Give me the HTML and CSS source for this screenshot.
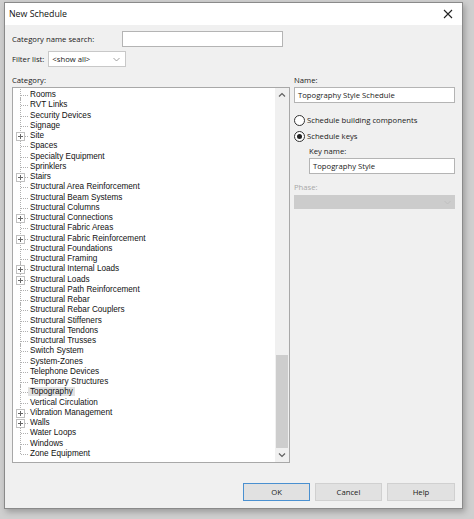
FILE: index.html
```html
<!DOCTYPE html>
<html>
<head>
<meta charset="utf-8">
<link rel="stylesheet" href="styles.css">
</head>
<body>
<div class="backdrop">
  <div class="window">
    <div class="titlebar">
      <span class="title">New Schedule</span>
      <svg class="close" width="10" height="10" viewBox="0 0 10 10"><path d="M1 1L9 9M9 1L1 9" stroke="#222" stroke-width="1.1"/></svg>
    </div>
    <div class="content">
      <div class="row search-row">
        <span class="label search-label">Category name search:</span>
        <div class="textbox search-box"></div>
      </div>
      <div class="row filter-row">
        <span class="label">Filter list:</span>
        <div class="textbox select">
          <span>&lt;show all&gt;</span>
          <svg width="7" height="5" viewBox="0 0 7 5"><path d="M0.5 1L3.5 4L6.5 1" fill="none" stroke="#888" stroke-width="0.8"/></svg>
        </div>
      </div>
      <div class="main">
        <div class="left">
          <div class="label cat-label">Category:</div>
          <div class="listbox">
            <div class="tree">
              <ul>
                <li>Rooms</li>
                <li>RVT Links</li>
                <li>Security Devices</li>
                <li>Signage</li>
                <li class="has"><span class="exp"></span>Site</li>
                <li>Spaces</li>
                <li>Specialty Equipment</li>
                <li>Sprinklers</li>
                <li class="has"><span class="exp"></span>Stairs</li>
                <li>Structural Area Reinforcement</li>
                <li>Structural Beam Systems</li>
                <li>Structural Columns</li>
                <li class="has"><span class="exp"></span>Structural Connections</li>
                <li>Structural Fabric Areas</li>
                <li class="has"><span class="exp"></span>Structural Fabric Reinforcement</li>
                <li>Structural Foundations</li>
                <li>Structural Framing</li>
                <li class="has"><span class="exp"></span>Structural Internal Loads</li>
                <li class="has"><span class="exp"></span>Structural Loads</li>
                <li>Structural Path Reinforcement</li>
                <li>Structural Rebar</li>
                <li>Structural Rebar Couplers</li>
                <li>Structural Stiffeners</li>
                <li>Structural Tendons</li>
                <li>Structural Trusses</li>
                <li>Switch System</li>
                <li>System-Zones</li>
                <li>Telephone Devices</li>
                <li>Temporary Structures</li>
                <li><span class="sel">Topography</span></li>
                <li>Vertical Circulation</li>
                <li class="has"><span class="exp"></span>Vibration Management</li>
                <li class="has"><span class="exp"></span>Walls</li>
                <li>Water Loops</li>
                <li>Windows</li>
                <li class="last">Zone Equipment</li>
              </ul>
            </div>
            <div class="scrollbar">
              <svg class="arrow" width="8" height="6" viewBox="0 0 8 6"><path d="M1 4.5L4 1.5L7 4.5" fill="none" stroke="#606060" stroke-width="1.2"/></svg>
              <div class="track"><div class="thumb"></div></div>
              <svg class="arrow" width="8" height="6" viewBox="0 0 8 6"><path d="M1 1.5L4 4.5L7 1.5" fill="none" stroke="#606060" stroke-width="1.2"/></svg>
            </div>
          </div>
        </div>
        <div class="right">
          <div class="label">Name:</div>
          <div class="textbox field">Topography Style Schedule</div>
          <div class="radio-row first"><span class="radio"></span><span class="label">Schedule building components</span></div>
          <div class="radio-row"><span class="radio on"></span><span class="label">Schedule keys</span></div>
          <div class="indent">
            <div class="label">Key name:</div>
            <div class="textbox field">Topography Style</div>
          </div>
          <div class="label disabled phase">Phase:</div>
          <div class="dis-select">
            <svg width="7" height="5" viewBox="0 0 7 5"><path d="M0.5 1L3.5 4L6.5 1" fill="none" stroke="#bdbdbd" stroke-width="0.8"/></svg>
          </div>
        </div>
      </div>
      <div class="buttons">
        <div class="btn default">OK</div>
        <div class="btn">Cancel</div>
        <div class="btn">Help</div>
      </div>
    </div>
  </div>
</div>
</body>
</html>
```
FILE: styles.css
```css
html, body {
  margin: 0;
  padding: 0;
}
body {
  width: 474px;
  height: 519px;
  overflow: hidden;
  background: #cfcfcf;
  font-family: "Liberation Sans", Arial, sans-serif;
  color: #1a1a1a;
}
.backdrop {
  padding: 2px 0 0 4px;
}
.window {
  width: 457px;
  height: 505px;
  border: 1px solid #8a8a8a;
  background: #f0f0f0;
  box-shadow: 2px 3px 6px rgba(0,0,0,0.25);
  display: flex;
  flex-direction: column;
}
.titlebar {
  height: 22px;
  background: #ffffff;
  display: flex;
  align-items: center;
  justify-content: space-between;
  padding: 0 9px 0 4px;
  flex-shrink: 0;
}
.title {
  font-family: "Open Sans", "Noto Sans", sans-serif;
  font-size: 8.8px;
  color: #111;
}
.content {
  flex: 1;
  display: flex;
  flex-direction: column;
  padding: 0 7px 0 7px;
}
.label {
  font-family: "Open Sans", "Noto Sans", sans-serif;
  font-size: 7.7px;
  color: #1a1a1a;
  white-space: nowrap;
}
.row {
  display: flex;
  align-items: center;
}
.search-row {
  margin-top: 5px;
  height: 17px;
}
.search-label {
  width: 110px;
}
.search-box {
  width: 161px;
  height: 16px;
}
.textbox {
  background: #fff;
  border: 1px solid #b4b4b4;
  box-sizing: border-box;
}
.filter-row {
  margin-top: 4px;
  height: 16px;
}
.select {
  margin-left: 4px;
  width: 78px;
  height: 16px;
  display: flex;
  align-items: center;
  justify-content: space-between;
  padding: 0 5px 0 3px;
  font-family: "Open Sans", "Noto Sans", sans-serif;
  font-size: 7.7px;
  color: #1a1a1a;
  border-color: #c8c8c8;
}
.main {
  display: flex;
  margin-top: 7px;
  gap: 4px;
}
.left {
  width: 278px;
  display: flex;
  flex-direction: column;
}
.cat-label {
  height: 12px;
  line-height: 12px;
}
.listbox {
  margin-top: 1px;
  height: 376px;
  box-sizing: border-box;
  border: 1px solid #a8a8a8;
  background: #fff;
  display: flex;
  overflow: hidden;
}
.tree {
  flex: 1;
  overflow: hidden;
  padding-top: 2px;
}
.tree ul {
  list-style: none;
  margin: 0 0 0 7px;
  padding: 0;
  position: relative;
}
.tree li {
  position: relative;
  height: 10.26px;
  line-height: 10.26px;
  padding-left: 10px;
  font-family: "Liberation Sans", Arial, sans-serif;
  font-size: 8.2px;
  color: #111;
  white-space: nowrap;
}
.tree li::before {
  content: "";
  position: absolute;
  left: 0;
  top: -3px;
  bottom: 0;
  border-left: 1px dotted #b0b0b0;
}
.tree li.last::before {
  bottom: 5px;
}
.tree li::after {
  content: "";
  position: absolute;
  left: 1px;
  top: 5px;
  width: 7px;
  border-top: 1px dotted #b0b0b0;
}
.tree .exp {
  position: absolute;
  left: -4px;
  top: 1px;
  width: 9px;
  height: 9px;
  box-sizing: border-box;
  border: 1px solid #c0c0c0;
  background:
    linear-gradient(#666, #666) center / 5px 1px no-repeat,
    linear-gradient(#666, #666) center / 1px 5px no-repeat,
    #fff;
  z-index: 1;
}
.tree .sel {
  background: #e2e2e2;
  padding: 0 2px;
  margin-left: -2px;
}
.scrollbar {
  width: 14px;
  background: #f0f0f0;
  display: flex;
  flex-direction: column;
  align-items: center;
}
.scrollbar .arrow {
  flex-shrink: 0;
  margin: 4px 0;
}
.track {
  flex: 1;
  width: 100%;
  display: flex;
  flex-direction: column;
  justify-content: flex-end;
}
.thumb {
  height: 93px;
  margin: 0 1px;
  background: #cdcdcd;
}
.right {
  width: 161px;
  display: flex;
  flex-direction: column;
}
.right > .label:first-child {
  height: 12px;
  line-height: 12px;
}
.field {
  height: 16px;
  font-family: "Open Sans", "Noto Sans", sans-serif;
  font-size: 7.7px;
  color: #1a1a1a;
  line-height: 14px;
  padding-left: 3px;
  margin-top: 1px;
}
.radio-row {
  display: flex;
  align-items: center;
  height: 16px;
}
.radio-row.first {
  margin-top: 9px;
}
.radio {
  width: 11px;
  height: 11px;
  box-sizing: border-box;
  border: 1px solid #333;
  border-radius: 50%;
  background: #fff;
  margin-right: 2px;
  flex-shrink: 0;
  display: flex;
  align-items: center;
  justify-content: center;
}
.radio.on::after {
  content: "";
  width: 5px;
  height: 5px;
  border-radius: 50%;
  background: #222;
}
.indent {
  padding-left: 15px;
  margin-top: 2px;
}
.indent .label {
  height: 11px;
  line-height: 11px;
}
.indent .field {
  margin-top: 1px;
}
.phase {
  margin-top: 8px;
  height: 10px;
  line-height: 10px;
}
.label.disabled {
  color: #a8a8a8;
}
.dis-select {
  margin-top: 3px;
  height: 14px;
  background: #cccccc;
  display: flex;
  align-items: center;
  justify-content: flex-end;
  padding-right: 4px;
}
.buttons {
  margin-top: 20px;
  display: flex;
  justify-content: flex-end;
  gap: 5px;
}
.btn {
  width: 67px;
  height: 18px;
  box-sizing: border-box;
  border: 1px solid #d0d0d0;
  background: #e1e1e1;
  display: flex;
  align-items: center;
  justify-content: center;
  font-family: "Open Sans", "Noto Sans", sans-serif;
  font-size: 7.7px;
  color: #1a1a1a;
}
.btn.default {
  border: 1px solid #4a90d0;
}
.btn:last-child {
  width: 68px;
}
```
